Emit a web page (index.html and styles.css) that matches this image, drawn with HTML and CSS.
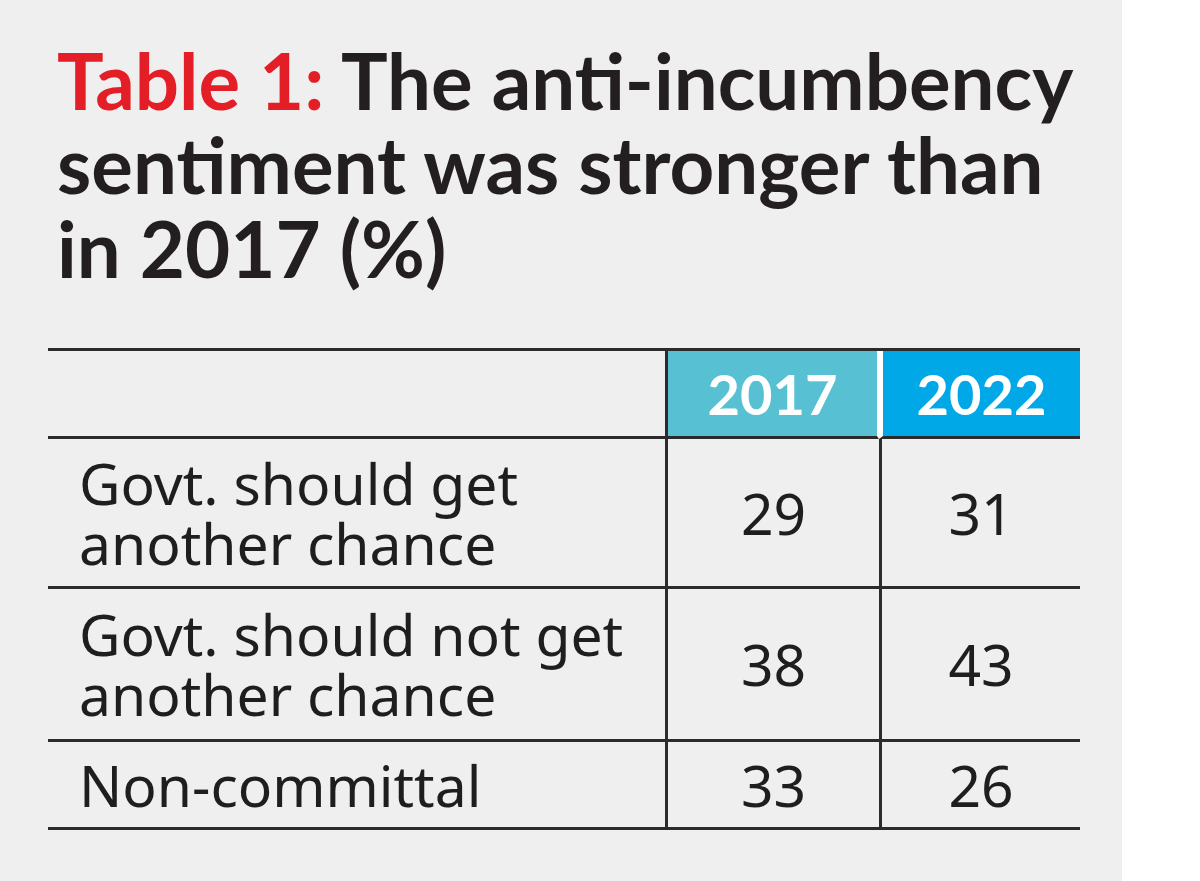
FILE: index.html
```html
<!DOCTYPE html>
<html>
<head>
<meta charset="utf-8">
<link rel="stylesheet" href="styles.css">
</head>
<body>
<div class="panel">
  <h1 class="title"><span class="red">Table 1:</span> The anti-incumbency sentiment was stronger than in 2017 (%)</h1>
  <div class="table">
    <div class="cell head c1"></div>
    <div class="cell head c2 y17">2017</div>
    <div class="cell head c3 y22">2022</div>

    <div class="cell r1 c1 label">Govt. should get another chance</div>
    <div class="cell r1 c2 num">29</div>
    <div class="cell r1 c3 num">31</div>

    <div class="cell r2 c1 label">Govt. should not get another chance</div>
    <div class="cell r2 c2 num">38</div>
    <div class="cell r2 c3 num">43</div>

    <div class="cell r3 c1 label">Non-committal</div>
    <div class="cell r3 c2 num">33</div>
    <div class="cell r3 c3 num">26</div>
  </div>
</div>
</body>
</html>
```
FILE: styles.css
```css
html, body {
  margin: 0;
  padding: 0;
  background: #ffffff;
}

.panel {
  width: 1122px;
  height: 881px;
  box-sizing: border-box;
  background: #efefef;
  padding: 38px 0 0 48px;
  overflow: hidden;
}

.title {
  margin: 0 0 0 9px;
  width: 1040px;
  font-family: "Lato", "Noto Sans", sans-serif;
  font-weight: 700;
  font-size: 78px;
  line-height: 84px;
  color: #231f20;
}

.red {
  color: #e41e26;
}

.table {
  margin-top: 58px;
  width: 1032px;
  display: grid;
  grid-template-columns: 617px 214px 201px;
  grid-template-rows: 88px 150px 153px 88px;
  border-top: 3px solid #2b2b2b;
}

.cell {
  box-sizing: border-box;
  border-bottom: 3px solid #2b2b2b;
  display: flex;
  align-items: center;
  font-family: "Noto Sans", "Open Sans", sans-serif;
  font-size: 57px;
  line-height: 60px;
  color: #1e1e1e;
}

.c2, .c3 {
  border-left: 3px solid #2b2b2b;
  justify-content: center;
}

.label {
  padding-left: 31px;
}

.num {
  text-align: center;
}

.y17, .y22 {
  font-family: "Lato", "Noto Sans", sans-serif;
  font-weight: 700;
  font-size: 56px;
  color: #ffffff;
}

.y17 {
  background: #57c0d3;
  border-right: 2px solid #ffffff;
}

.y22 {
  background: #00a8e8;
  border-left: 4px solid #ffffff;
}
```
